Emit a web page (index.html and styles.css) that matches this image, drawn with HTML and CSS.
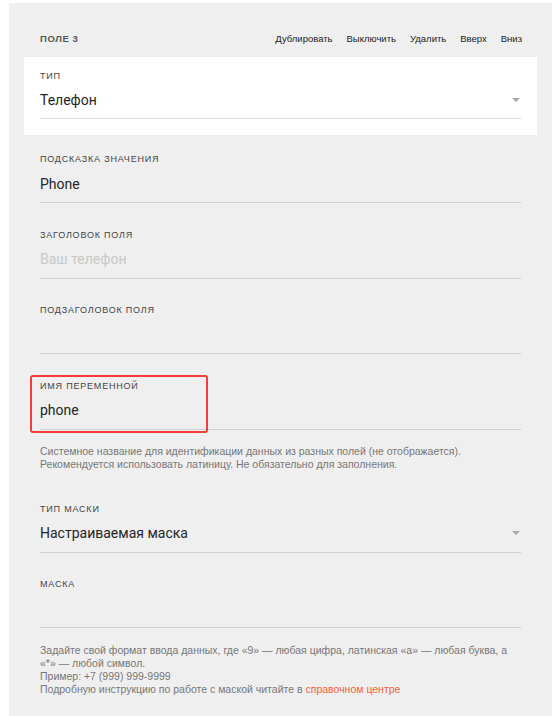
FILE: index.html
```html
<!DOCTYPE html>
<html lang="ru">
<head>
<meta charset="utf-8">
<title>Поле 3</title>
<link rel="stylesheet" href="styles.css">
</head>
<body>
<div class="panel">
  <div class="header">
    <div class="title">Поле 3</div>
    <div class="actions">
      <span class="action">Дублировать</span>
      <span class="action">Выключить</span>
      <span class="action">Удалить</span>
      <span class="action">Вверх</span>
      <span class="action">Вниз</span>
    </div>
  </div>

  <div class="typebox">
    <div class="field select">
      <div class="label">Тип</div>
      <div class="input"><span class="value">Телефон</span><span class="caret"></span></div>
    </div>
  </div>

  <div class="fields">
    <div class="field">
      <div class="label">Подсказка значения</div>
      <div class="input"><span class="value">Phone</span></div>
    </div>
    <div class="field">
      <div class="label">Заголовок поля</div>
      <div class="input"><span class="value placeholder">Ваш телефон</span></div>
    </div>
    <div class="field">
      <div class="label">Подзаголовок поля</div>
      <div class="input"><span class="value"></span></div>
    </div>
    <div class="field marked">
      <div class="label">Имя переменной</div>
      <div class="input"><span class="value">phone</span></div>
      <div class="highlight"></div>
    </div>
    <div class="help help-var">Системное название для идентификации данных из разных полей (не отображается).<br>Рекомендуется использовать латиницу. Не обязательно для заполнения.</div>
    <div class="field select">
      <div class="label">Тип маски</div>
      <div class="input"><span class="value">Настраиваемая маска</span><span class="caret"></span></div>
    </div>
    <div class="field">
      <div class="label">Маска</div>
      <div class="input"><span class="value"></span></div>
    </div>
    <div class="help">Задайте свой формат ввода данных, где «9» — любая цифра, латинская «a» — любая буква, а<br>«*» — любой символ.<br>Пример: +7 (999) 999-9999<br>Подробную инструкцию по работе с маской читайте в <span class="link">справочном центре</span></div>
  </div>
</div>
</body>
</html>
```

FILE: styles.css
```css
html, body {
  margin: 0;
  padding: 0;
  background: #ffffff;
}

body {
  font-family: "Liberation Sans", Arial, sans-serif;
  color: #333;
  overflow: hidden;
}

.panel {
  margin: 3px 0 0 9px;
  width: 543px;
  min-height: 730px;
  box-sizing: border-box;
  background: #efefef;
  padding: 0 15px;
}

.header {
  display: flex;
  align-items: center;
  justify-content: space-between;
  padding: 30px 15px 12px 16px;
  height: 12px;
}

.title {
  font-size: 9.5px;
  line-height: 12px;
  font-weight: bold;
  letter-spacing: 0.6px;
  text-transform: uppercase;
  color: #555;
}

.actions {
  display: flex;
  gap: 14px;
  font-size: 9.5px;
  line-height: 12px;
  color: #222;
}

.typebox {
  background: #ffffff;
  padding: 13px 16px 16px;
}

.fields {
  padding: 18px 16px 0;
}

.field {
  position: relative;
  margin-bottom: 25.5px;
}

.typebox .field {
  margin-bottom: 0;
}

.label {
  font-size: 9px;
  line-height: 12px;
  letter-spacing: 0.8px;
  text-transform: uppercase;
  color: #444;
}

.input {
  display: flex;
  align-items: center;
  justify-content: space-between;
  height: 37px;
  border-bottom: 1px solid #cfcfcf;
}

.typebox .input {
  height: 36px;
  border-bottom-color: #dddddd;
}

.value {
  font-family: Roboto, "Liberation Sans", sans-serif;
  font-size: 14px;
  color: #262626;
}

.placeholder {
  color: #c8c8c8;
}

.caret {
  width: 0;
  height: 0;
  margin-right: 1px;
  border-left: 4px solid transparent;
  border-right: 4px solid transparent;
  border-top: 4px solid #a8a8a8;
}

.highlight {
  position: absolute;
  left: -10px;
  top: -5px;
  width: 178px;
  height: 58px;
  box-sizing: border-box;
  border: 2px solid #f53b3b;
  border-radius: 3px;
  pointer-events: none;
}

.help {
  margin-top: -10px;
  font-size: 10.5px;
  line-height: 13px;
  color: #777;
}

.help-var {
  margin-bottom: 31.5px;
}

.link {
  color: #f4623a;
}
```
